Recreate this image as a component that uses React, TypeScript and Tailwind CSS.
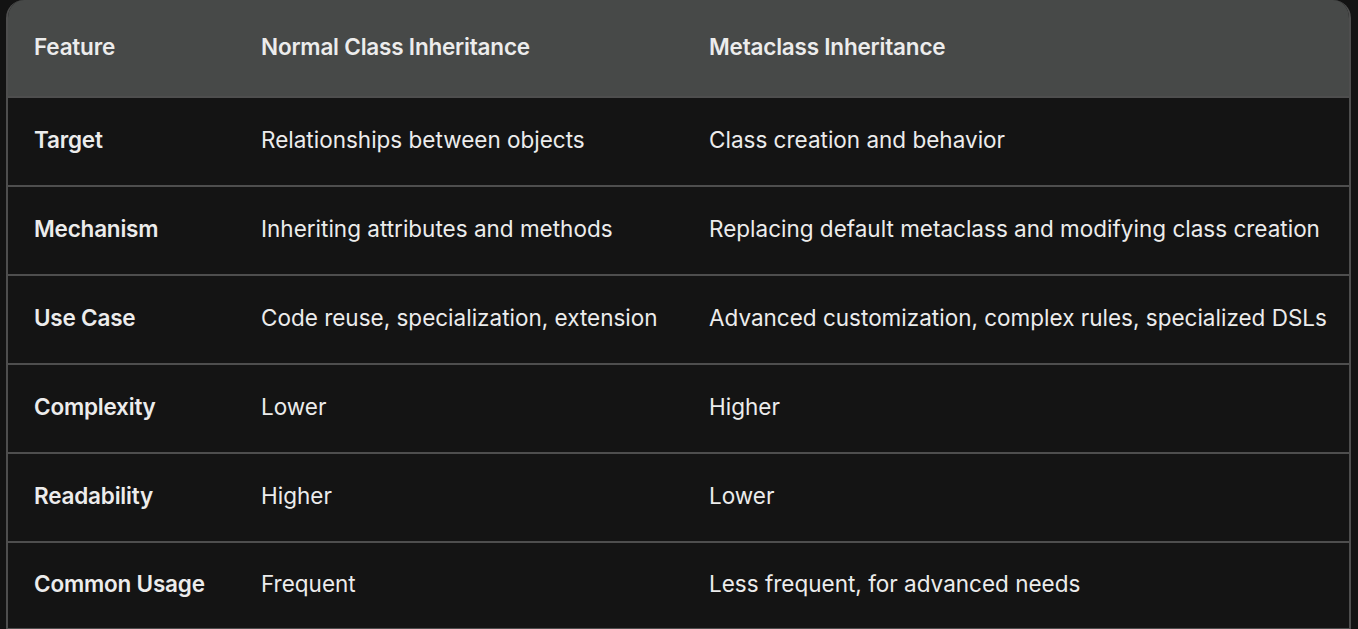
const rows = [
  ["Target", "Relationships between objects", "Class creation and behavior"],
  ["Mechanism", "Inheriting attributes and methods", "Replacing default metaclass and modifying class creation"],
  ["Use Case", "Code reuse, specialization, extension", "Advanced customization, complex rules, specialized DSLs"],
  ["Complexity", "Lower", "Higher"],
  ["Readability", "Higher", "Lower"],
  ["Common Usage", "Frequent", "Less frequent, for advanced needs"],
];

export default function App() {
  return (
    <div
      className="w-[1358px] h-[629px] overflow-hidden bg-[#131313] pl-[6px] pr-[7px] text-[#ececec]"
      style={{ fontFamily: "Inter, 'Noto Sans', sans-serif" }}
    >
      <div className="rounded-t-[18px] overflow-hidden border-x-2 border-b-2 border-[#4e4e4e] bg-[#141414]">
        <div className="flex h-[96px] items-center bg-[#474948] font-semibold text-[22.5px] tracking-[-0.2px] pb-[3px]">
          <div className="w-[253px] pl-[26px]">Feature</div>
          <div className="w-[448px]">Normal Class Inheritance</div>
          <div className="flex-1">Metaclass Inheritance</div>
        </div>
        {rows.map((r, i) => (
          <div
            key={r[0]}
            className={`flex items-center border-t-2 border-[#4e4e4e] text-[22.5px] pb-[4px] ${i === rows.length - 1 ? "h-[87px]" : "h-[89px]"}`}
          >
            <div className="w-[253px] pl-[26px] font-semibold tracking-[-0.2px]">{r[0]}</div>
            <div className="w-[448px]">{r[1]}</div>
            <div className="flex-1 whitespace-nowrap">{r[2]}</div>
          </div>
        ))}
      </div>
    </div>
  );
}
